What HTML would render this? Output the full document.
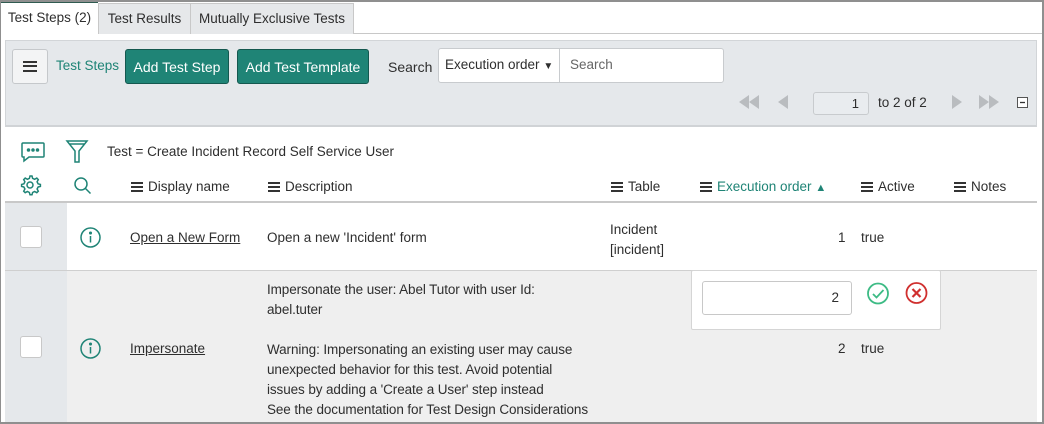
<!DOCTYPE html>
<html><head><meta charset="utf-8"><style>
*{box-sizing:border-box;margin:0;padding:0}
body{width:1044px;height:424px;background:#fff;font-family:"Liberation Sans",sans-serif;font-size:13px;color:#2e2e2e;position:relative;overflow:hidden}
.a{position:absolute;white-space:nowrap}
.frame{position:absolute;left:0;top:0;width:1044px;height:424px;border-top:2px solid #8f8f8f;border-right:2px solid #8f8f8f;border-left:1px solid #8f8f8f;border-bottom:2px solid #8f8f8f}
.tab{position:absolute;top:3px;height:31px;line-height:30px;text-align:center;background:#e6e8ea;border:1px solid #c8c8c8;border-bottom:none;font-size:13.5px}
.btn{position:absolute;top:49px;height:35px;line-height:34px;background:#1f8476;color:#fff;border:1px solid #14584f;border-radius:3px;text-align:center;font-size:14px}
.hb{display:inline-block;width:12px;height:10px;border-top:2px solid #333;border-bottom:2px solid #333;position:relative;vertical-align:-1px;margin-right:5px}
.hb:after{content:"";position:absolute;left:0;right:0;top:2px;height:2px;background:#333}
.cb{position:absolute;left:20px;width:22px;height:22px;background:#fff;border:1px solid #c8c8c8;border-radius:3px}
.lnk{text-decoration:underline}
</style></head><body>
<div class="a" style="left:0;top:0;width:98px;height:3px;background:#2f5b50"></div>
<div class="a" style="left:0;top:33px;width:1044px;height:1px;background:#c8c8c8"></div>
<div class="tab" style="left:0;width:99px;background:#fff;border:none;height:32px">Test Steps (2)</div>
<div class="tab" style="left:98px;width:93px">Test Results</div>
<div class="tab" style="left:190px;width:164px">Mutually Exclusive Tests</div>

<div class="a" style="left:5px;top:40px;width:1032px;height:87px;background:#e5e8eb;border:1px solid #d2d5d8;border-bottom:2px solid #d0d3d6"></div>
<div class="a" style="left:12px;top:49px;width:36px;height:35px;background:#f3f4f5;border:1px solid #c5c8cb;border-radius:3px"><span class="hb" style="position:absolute;left:10px;top:11px;width:14px;height:11px;border-width:2.5px"></span></div>
<div class="a" style="left:56px;top:58px;color:#1f8476;font-size:13.5px">Test Steps</div>
<div class="btn" style="left:125px;width:104px">Add Test Step</div>
<div class="btn" style="left:237px;width:132px">Add Test Template</div>
<div class="a" style="left:388px;top:59px;font-size:14px">Search</div>
<div class="a" style="left:438px;top:48px;width:286px;height:35px;background:#fff;border:1px solid #c8cbce;border-radius:3px"></div>
<div class="a" style="left:559px;top:49px;width:1px;height:33px;background:#c8cbce"></div>
<div class="a" style="left:445px;top:57px;font-size:13.5px">Execution order <span style="font-size:10px">▼</span></div>
<div class="a" style="left:570px;top:57px;color:#666;font-size:13.5px">Search</div>
<svg class="a" style="left:737px;top:95px" width="300" height="20">
<g fill="#b9bcbf"><polygon points="2,7 12,0 12,14"/><polygon points="12,7 22,0 22,14"/><polygon points="41,7 51,0 51,14"/><polygon points="215,0 225,7 215,14"/><polygon points="242,0 252,7 242,14"/><polygon points="252,0 262,7 252,14"/></g>
<rect x="280.5" y="2.5" width="10" height="10" fill="#fff" stroke="#555"/><line x1="283" y1="7.5" x2="288" y2="7.5" stroke="#333" stroke-width="1.3"/>
</svg>
<div class="a" style="left:813px;top:92px;width:56px;height:23px;background:#e9ecef;border:1px solid #c8cbce;border-radius:3px;text-align:right;padding-right:9px;line-height:21px">1</div>
<div class="a" style="left:878px;top:95px;font-size:13.5px">to 2 of 2</div>

<svg class="a" style="left:20px;top:140px" width="80" height="60" fill="none" stroke="#1f8476" stroke-width="1.5">
<path d="M3,3 h20 a1,1 0 0 1 1,1 v12 a1,1 0 0 1 -1,1 h-14 l-5,4 v-4 h-1 a1,1 0 0 1 -1,-1 v-12 a1,1 0 0 1 1,-1z"/>
<circle cx="8.5" cy="10" r="1" fill="#1f8476"/><circle cx="13" cy="10" r="1" fill="#1f8476"/><circle cx="17.5" cy="10" r="1" fill="#1f8476"/>
<path d="M47,1 h20 l-8,10 v11 h-4 v-11z M49,4 h16"/>
<circle cx="10" cy="45" r="3"/>
<path d="M10,36 l2,0 .6,2.3 2,1 2.2,-1.2 1.5,1.5 -1.2,2.2 1,2 2.3,.6 v2 l-2.3,.6 -1,2 1.2,2.2 -1.5,1.5 -2.2,-1.2 -2,1 -.6,2.3 h-2 l-.6,-2.3 -2,-1 -2.2,1.2 -1.5,-1.5 1.2,-2.2 -1,-2 -2.3,-.6 v-2 l2.3,-.6 1,-2 -1.2,-2.2 1.5,-1.5 2.2,1.2 2,-1 .6,-2.3z"/>
<circle cx="61" cy="44" r="6"/><path d="M65.5,48.5 l5,5"/>
</svg>
<div class="a" style="left:107px;top:144px;font-size:13.5px">Test = Create Incident Record Self Service User</div>

<div class="a" style="left:131px;top:179px;font-size:13.5px"><span class="hb"></span>Display name</div>
<div class="a" style="left:268px;top:179px;font-size:13.5px"><span class="hb"></span>Description</div>
<div class="a" style="left:611px;top:179px;font-size:13.5px"><span class="hb"></span>Table</div>
<div class="a" style="left:700px;top:179px;font-size:13.5px;color:#1f8476"><span class="hb"></span>Execution order <span style="font-size:11px">▲</span></div>
<div class="a" style="left:861px;top:179px;font-size:13.5px"><span class="hb"></span>Active</div>
<div class="a" style="left:954px;top:179px;font-size:13.5px"><span class="hb"></span>Notes</div>
<div class="a" style="left:5px;top:201px;width:1032px;height:2px;background:#c8c8c8"></div>

<div class="a" style="left:5px;top:203px;width:62px;height:68px;background:#e5e8eb"></div>
<div class="a" style="left:5px;top:270px;width:1032px;height:1px;background:#cfcfcf"></div>
<div class="a" style="left:5px;top:271px;width:1032px;height:153px;background:#efefef"></div>
<div class="a" style="left:5px;top:271px;width:62px;height:153px;background:#e5e8eb"></div>
<div class="cb" style="top:226px"></div>
<div class="cb" style="top:336px"></div>
<svg class="a" style="left:80px;top:227px" width="22" height="22" fill="none" stroke="#1f8476" stroke-width="1.5"><circle cx="10.5" cy="10.5" r="9.5"/><line x1="10.5" y1="9" x2="10.5" y2="15.5"/><circle cx="10.5" cy="6" r=".8" fill="#1f8476"/></svg>
<svg class="a" style="left:80px;top:338px" width="22" height="22" fill="none" stroke="#1f8476" stroke-width="1.5"><circle cx="10.5" cy="10.5" r="9.5"/><line x1="10.5" y1="9" x2="10.5" y2="15.5"/><circle cx="10.5" cy="6" r=".8" fill="#1f8476"/></svg>
<div class="a lnk" style="left:130px;top:230px;font-size:13.5px">Open a New Form</div>
<div class="a" style="left:267px;top:230px;font-size:13.5px">Open a new 'Incident' form</div>
<div class="a" style="left:610px;top:220px;font-size:13.5px;line-height:20px">Incident<br>[incident]</div>
<div class="a" style="left:838px;top:230px;font-size:13.5px">1</div>
<div class="a" style="left:861px;top:230px;font-size:13.5px">true</div>

<div class="a lnk" style="left:130px;top:341px;font-size:13.5px">Impersonate</div>
<div class="a" style="left:267px;top:280px;font-size:13.5px;line-height:20px;letter-spacing:-0.1px">Impersonate the user: Abel Tutor with user Id:<br>abel.tuter<br><br>Warning: Impersonating an existing user may cause<br>unexpected behavior for this test. Avoid potential<br>issues by adding a 'Create a User' step instead<br>See the documentation for Test Design Considerations</div>
<div class="a" style="left:838px;top:341px;font-size:13.5px">2</div>
<div class="a" style="left:861px;top:341px;font-size:13.5px">true</div>

<div class="a" style="left:691px;top:270px;width:250px;height:60px;background:#fff;border:1px solid #d5d5d5;border-radius:2px"></div>
<div class="a" style="left:702px;top:281px;width:150px;height:34px;border:1px solid #c8c8c8;border-radius:3px;text-align:right;padding-right:12px;line-height:32px;font-size:13.5px">2</div>
<svg class="a" style="left:866px;top:282px" width="70" height="26" fill="none" stroke-width="1.8">
<circle cx="12" cy="11.5" r="10" stroke="#3dbb85"/><path d="M7,12 l3.5,3.5 7,-7.5" stroke="#3dbb85"/>
<circle cx="50.5" cy="11" r="10" stroke="#d0302f"/><path d="M46.5,7 l8,8 M54.5,7 l-8,8" stroke="#d0302f" stroke-width="2.2"/>
</svg>
<div class="frame"></div>
</body></html>
